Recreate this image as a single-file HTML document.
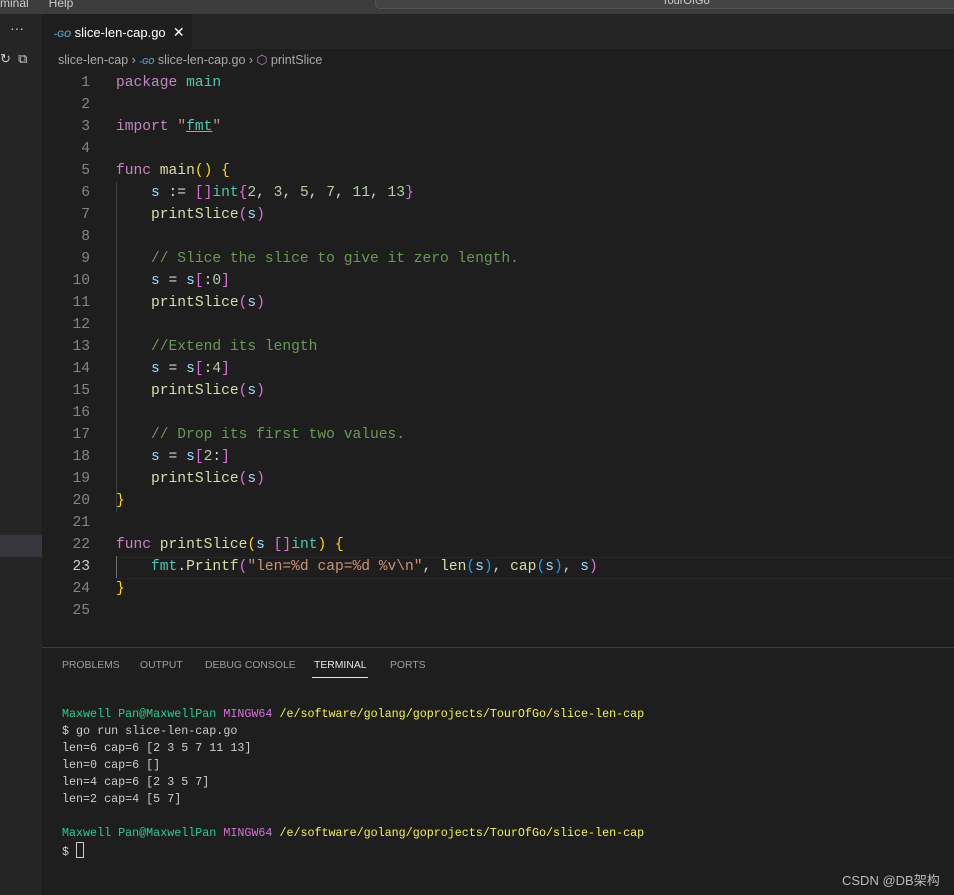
<!DOCTYPE html>
<html><head><meta charset="utf-8"><style>
body{margin:0;width:954px;height:895px;background:#1e1e1e;position:relative;overflow:hidden;font-family:"Liberation Sans",sans-serif}
.a{position:absolute}
.code{font-family:"Liberation Mono",monospace;font-size:14.6px;white-space:pre;position:absolute;left:0;top:1px;width:954px}
.ln{position:absolute;left:42px;width:48px;text-align:right;color:#858585;height:22px;line-height:22px}
.cl{position:absolute;left:116px;height:22px;line-height:22px;color:#d4d4d4}
.k{color:#c586c0}.f{color:#dcdcaa}.p{color:#4ec9b0}.v{color:#9cdcfe}.n{color:#b5cea8}.c{color:#6a9955}.s{color:#ce9178}
.y{color:#ffd700}.m{color:#da70d6}.b{color:#179fff}.t{color:#4ec9b0}
.term{font-family:"Liberation Mono",monospace;font-size:11.7px;white-space:pre;color:#cccccc;position:absolute;left:62px;line-height:17px}
.tab{position:absolute;top:660px;font-size:10.4px;color:#9d9d9d}
</style></head><body>
<div class="a" style="left:0;top:0;width:954px;height:14px;background:#3c3c3c"></div>
<div class="a" style="left:0;top:-4px;font-size:12px;color:#ccc">minal&nbsp;&nbsp;&nbsp;&nbsp;&nbsp;&nbsp;Help</div>
<div class="a" style="left:375px;top:-6px;width:600px;height:13px;border:1px solid #555;border-radius:5px;background:#444"></div>
<div class="a" style="left:662px;top:-5px;font-size:11px;color:#ccc">TourOfGo</div>
<div class="a" style="left:0;top:14px;width:42px;height:881px;background:#252526"></div>
<div class="a" style="left:0;top:535px;width:42px;height:22px;background:#37373d"></div>
<div class="a" style="left:10px;top:20px;color:#ccc;font-size:14px">···</div>
<div class="a" style="left:0;top:51px;color:#ccc;font-size:13px">↻&nbsp;&nbsp;⧉</div>
<div class="a" style="left:42px;top:14px;width:912px;height:35px;background:#252526"></div>
<div class="a" style="left:42px;top:14px;width:150px;height:35px;background:#1e1e1e"></div>
<div class="a" style="left:54px;top:24px;font-size:13px;color:#fff"><span style="color:#519aba;font-size:9px;font-weight:bold;font-style:italic">-GO</span> slice-len-cap.go&nbsp;&nbsp;<span style="font-size:14px">✕</span></div>
<div class="a" style="left:58px;top:52px;font-size:12.5px;color:#a9a9a9">slice-len-cap › <span style="color:#519aba;font-size:8px;font-weight:bold;font-style:italic">-GO</span> slice-len-cap.go › <span style="color:#b180d7">⬡</span> printSlice</div>
<div class="a" style="left:116px;top:557px;width:838px;height:20px;border-top:1px solid #282828;border-bottom:1px solid #282828"></div>
<div class="a" style="left:116px;top:182px;width:1px;height:330px;background:#404040"></div>
<div class="a" style="left:116px;top:556px;width:1px;height:22px;background:#707070"></div>
<div class="code">
<div class="ln" style="top:71px">1</div><div class="ln" style="top:93px">2</div><div class="ln" style="top:115px">3</div><div class="ln" style="top:137px">4</div><div class="ln" style="top:159px">5</div><div class="ln" style="top:181px">6</div><div class="ln" style="top:203px">7</div><div class="ln" style="top:225px">8</div><div class="ln" style="top:247px">9</div><div class="ln" style="top:269px">10</div><div class="ln" style="top:291px">11</div><div class="ln" style="top:313px">12</div><div class="ln" style="top:335px">13</div><div class="ln" style="top:357px">14</div><div class="ln" style="top:379px">15</div><div class="ln" style="top:401px">16</div><div class="ln" style="top:423px">17</div><div class="ln" style="top:445px">18</div><div class="ln" style="top:467px">19</div><div class="ln" style="top:489px">20</div><div class="ln" style="top:511px">21</div><div class="ln" style="top:533px">22</div><div class="ln" style="top:555px;color:#ccc">23</div><div class="ln" style="top:577px">24</div><div class="ln" style="top:599px">25</div>
<div class="cl" style="top:71px"><span class="k">package</span> <span class="p">main</span></div>
<div class="cl" style="top:115px"><span class="k">import</span> <span class="s">"</span><span class="p" style="text-decoration:underline">fmt</span><span class="s">"</span></div>
<div class="cl" style="top:159px"><span class="k">func</span> <span class="f">main</span><span class="y">()</span> <span class="y">{</span></div>
<div class="cl" style="top:181px">    <span class="v">s</span> := <span class="m">[]</span><span class="t">int</span><span class="m">{</span><span class="n">2</span>, <span class="n">3</span>, <span class="n">5</span>, <span class="n">7</span>, <span class="n">11</span>, <span class="n">13</span><span class="m">}</span></div>
<div class="cl" style="top:203px">    <span class="f">printSlice</span><span class="m">(</span><span class="v">s</span><span class="m">)</span></div>
<div class="cl" style="top:247px">    <span class="c">// Slice the slice to give it zero length.</span></div>
<div class="cl" style="top:269px">    <span class="v">s</span> = <span class="v">s</span><span class="m">[</span>:<span class="n">0</span><span class="m">]</span></div>
<div class="cl" style="top:291px">    <span class="f">printSlice</span><span class="m">(</span><span class="v">s</span><span class="m">)</span></div>
<div class="cl" style="top:335px">    <span class="c">//Extend its length</span></div>
<div class="cl" style="top:357px">    <span class="v">s</span> = <span class="v">s</span><span class="m">[</span>:<span class="n">4</span><span class="m">]</span></div>
<div class="cl" style="top:379px">    <span class="f">printSlice</span><span class="m">(</span><span class="v">s</span><span class="m">)</span></div>
<div class="cl" style="top:423px">    <span class="c">// Drop its first two values.</span></div>
<div class="cl" style="top:445px">    <span class="v">s</span> = <span class="v">s</span><span class="m">[</span><span class="n">2</span>:<span class="m">]</span></div>
<div class="cl" style="top:467px">    <span class="f">printSlice</span><span class="m">(</span><span class="v">s</span><span class="m">)</span></div>
<div class="cl" style="top:489px"><span class="y">}</span></div>
<div class="cl" style="top:533px"><span class="k">func</span> <span class="f">printSlice</span><span class="y">(</span><span class="v">s</span> <span class="m">[]</span><span class="t">int</span><span class="y">)</span> <span class="y">{</span></div>
<div class="cl" style="top:555px">    <span class="p">fmt</span>.<span class="f">Printf</span><span class="m">(</span><span class="s">"len=%d cap=%d %v\n"</span>, <span class="f">len</span><span class="b">(</span><span class="v">s</span><span class="b">)</span>, <span class="f">cap</span><span class="b">(</span><span class="v">s</span><span class="b">)</span>, <span class="v">s</span><span class="m">)</span></div>
<div class="cl" style="top:577px"><span class="y">}</span></div>
</div>
<div class="a" style="left:42px;top:647px;width:912px;height:1px;background:#3c3c3c"></div>
<div class="tab" style="left:62px">PROBLEMS</div>
<div class="tab" style="left:140px">OUTPUT</div>
<div class="tab" style="left:205px">DEBUG CONSOLE</div>
<div class="tab" style="left:314px;color:#e7e7e7">TERMINAL</div>
<div class="a" style="left:312px;top:677px;width:56px;height:1px;background:#e7e7e7"></div>
<div class="tab" style="left:390px">PORTS</div>
<div class="term" style="top:706px"><span style="color:#23d18b">Maxwell Pan@MaxwellPan</span> <span style="color:#d670d6">MINGW64</span> <span style="color:#f5f543">/e/software/golang/goprojects/TourOfGo/slice-len-cap</span>
$ go run slice-len-cap.go
len=6 cap=6 [2 3 5 7 11 13]
len=0 cap=6 []
len=4 cap=6 [2 3 5 7]
len=2 cap=4 [5 7]

<span style="color:#23d18b">Maxwell Pan@MaxwellPan</span> <span style="color:#d670d6">MINGW64</span> <span style="color:#f5f543">/e/software/golang/goprojects/TourOfGo/slice-len-cap</span>
$ <span style="display:inline-block;width:6px;height:14px;border:1px solid #ccc;vertical-align:-3px"></span></div>
<div class="a" style="left:842px;top:870px;font-size:13px;color:#bbb;font-family:'Liberation Sans','Noto Sans CJK SC',sans-serif">CSDN @DB架构</div>
</body></html>
